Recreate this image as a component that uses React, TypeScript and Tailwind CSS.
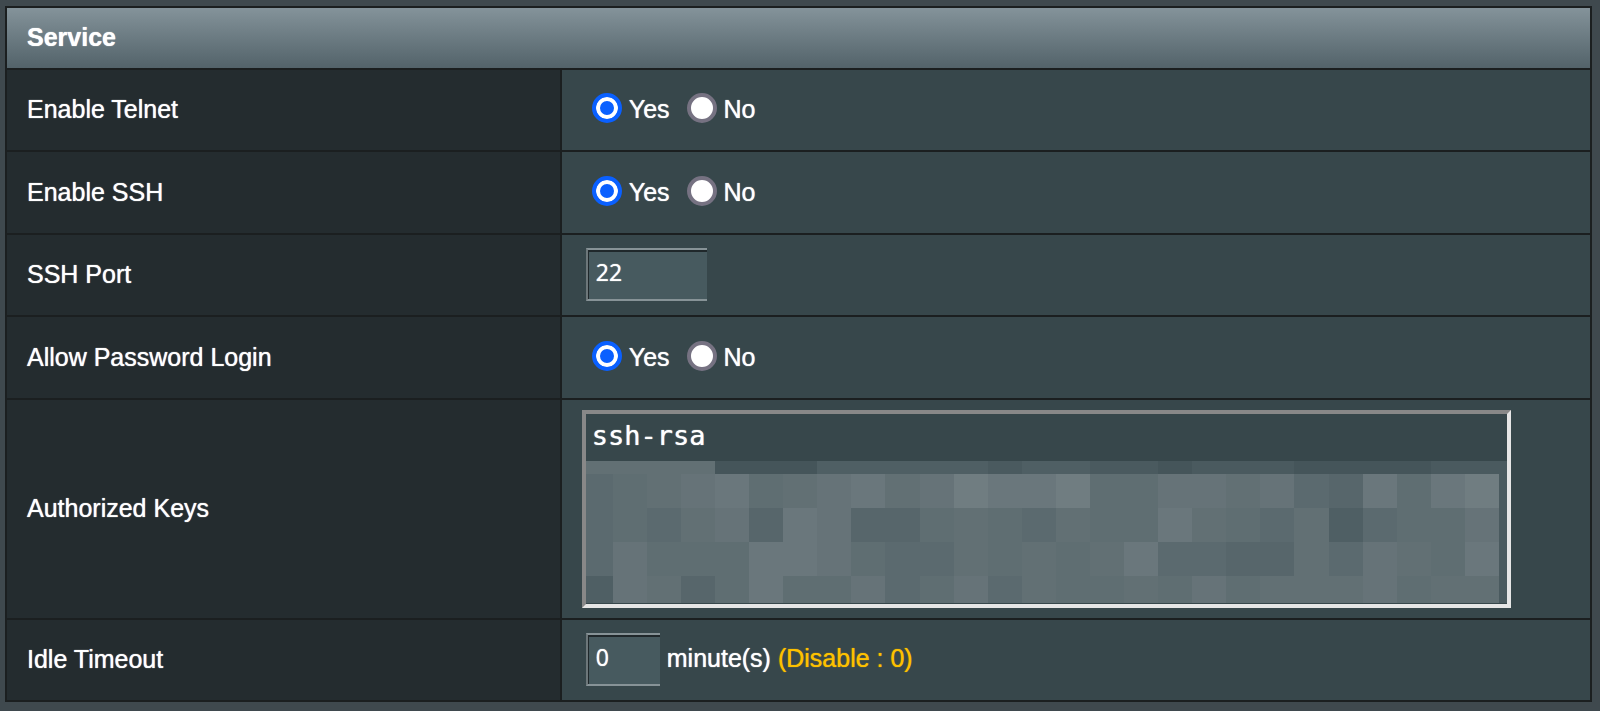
import React, { useState } from "react";

interface RadioProps {
  name: string
  label: string
}

interface RowProps {
  label: string
  htmlFor?: string
  height: string
  pad: string
  children: React.ReactNode
}

// one letter per block, dark to light
const shades: Record<string, string> = {
  x: "bg-[#45555a]",
  y: "bg-[#4a5a5f]",
  a: "bg-[#4f5f64]",
  b: "bg-[#57666b]",
  c: "bg-[#5b6a6f]",
  d: "bg-[#5f6e72]",
  e: "bg-[#627074]",
  f: "bg-[#667378]",
  g: "bg-[#6a777c]",
  h: "bg-[#707d81]",
}

const mosaic = [
  "eeeexxxaaaaayaayyxyyyxxxxyyy",
  "cdefgdefgefhgghddffefcbgdghy",
  "cdcefbgfbbdedceddgedceacddfy",
  "cfdddggfdccededegccbbecfedgy",
  "afebdgddfcdfceddedfdeeefdeey",
]

const YesNo = ({ name, label }: RadioProps) => {
  const [value, setValue] = useState("Yes")

  return (
    <div role="radiogroup" aria-label={label} className="flex items-center gap-[17px]">
      {["Yes", "No"].map(item => (
        <label key={item} className="flex items-center gap-[7px]">
          <input
            type="radio"
            name={name}
            value={item}
            checked={value === item}
            onChange={() => setValue(item)}
            className="-mt-[2px] size-[30px] appearance-none rounded-full border-4 border-[#767282] bg-white checked:border-[#0a60ff] checked:bg-[#0a60ff] checked:shadow-[inset_0_0_0_4px_#fff]"
          />
          {item}
        </label>
      ))}
    </div>
  )
}

const Row = ({ label, htmlFor, height, pad, children }: RowProps) => (
  <tr className={height}>
    <th scope="row" className="border-2 border-[#1b1f20] bg-[#242c2f] pt-0 pb-[2px] pl-5 text-left font-normal">
      {htmlFor ? <label htmlFor={htmlFor}>{label}</label> : label}
    </th>
    <td className={`border-2 border-[#1b1f20] bg-[#37474b] pt-0 ${pad}`}>{children}</td>
  </tr>
)

const inputStyle = "h-[53px] border-y-2 border-l-2 border-y-[#879397] border-l-[#6d777a] bg-[#475a5f] pl-[8px] pb-1 font-['Open_Sans',sans-serif] text-[23px] font-medium text-white shadow-[inset_1px_2px_0_#20282b] outline-none [text-shadow:0_0_1px_currentColor]"

const KeysBox = () => (
  <div className="relative h-[198px] w-full">
    <textarea
      id="keys"
      defaultValue="ssh-rsa"
      spellCheck={false}
      className="block h-full w-full resize-none overflow-hidden border-4 border-t-[#888888] border-l-[#888888] border-r-[#e6e6e6] border-b-[#e6e6e6] bg-[#37474b] px-[6px] py-[6px] font-['DejaVu_Sans_Mono',monospace] text-[27px] leading-8 text-white outline-none [text-shadow:0_0_1px_currentColor]"
    />
    {/* the key itself is hidden behind blocks */}
    <div aria-hidden="true" className="absolute inset-x-[4px] top-[51px] bottom-[5px] flex flex-col">
      {mosaic.map((line, i) => (
        <div
          key={i}
          className={`grid grid-cols-[27fr_repeat(26,34fr)_8fr] ${i === 0 ? "h-[13px]" : i === 4 ? "flex-1" : "h-[34px]"}`}
        >
          {line.split("").map((s, j) => (
            <div key={j} className={shades[s]} />
          ))}
        </div>
      ))}
    </div>
  </div>
)

const App = () => {
  const [port, setPort] = useState("22")
  const [idle, setIdle] = useState("0")

  return (
    <main className="min-h-screen bg-[#3f494e] pt-[6px] pr-[8px] pb-[9px] pl-[5px] font-['Liberation_Sans',Arial,sans-serif] text-[25px] leading-8 text-white [text-shadow:0_0_1px_currentColor]">
      <table className="w-full table-fixed border-collapse">
        <colgroup>
          <col className="w-[35%]" />
          <col />
        </colgroup>
        <thead>
          <tr className="h-[62px]">
            <th
              colSpan={2}
              className="border-2 border-[#1b1f20] bg-linear-to-b from-[#84939a] to-[#53636a] pt-0 pb-[2px] pl-5 text-left font-bold"
            >
              Service
            </th>
          </tr>
        </thead>
        <tbody>
          <Row label="Enable Telnet" height="h-[82px]" pad="pb-[2px] pl-[30px]">
            <YesNo name="telnet" label="Enable Telnet" />
          </Row>
          <Row label="Enable SSH" height="h-[83px]" pad="pb-[2px] pl-[30px]">
            <YesNo name="ssh" label="Enable SSH" />
          </Row>
          <Row label="SSH Port" htmlFor="port" height="h-[82px]" pad="pb-[2px] pl-[24px]">
            <input
              id="port"
              type="text"
              value={port}
              onChange={e => setPort(e.target.value)}
              className={`${inputStyle} block w-[121px]`}
            />
          </Row>
          <Row label="Allow Password Login" height="h-[83px]" pad="pb-[2px] pl-[30px]">
            <YesNo name="password" label="Allow Password Login" />
          </Row>
          <Row label="Authorized Keys" htmlFor="keys" height="h-[220px]" pad="pr-[79px] pb-0 pl-[20px]">
            <KeysBox />
          </Row>
          <Row label="Idle Timeout" htmlFor="idle" height="h-[82px]" pad="pb-[2px] pl-[24px]">
            <div className="flex items-center gap-[7px]">
              <input
                id="idle"
                type="text"
                value={idle}
                onChange={e => setIdle(e.target.value)}
                className={`${inputStyle} w-[74px]`}
              />
              <span className="pb-[2px]">
                minute(s) <span className="text-[#fdc100] [text-shadow:0_0_1px_currentColor]">(Disable : 0)</span>
              </span>
            </div>
          </Row>
        </tbody>
      </table>
    </main>
  )
}

export default App;
